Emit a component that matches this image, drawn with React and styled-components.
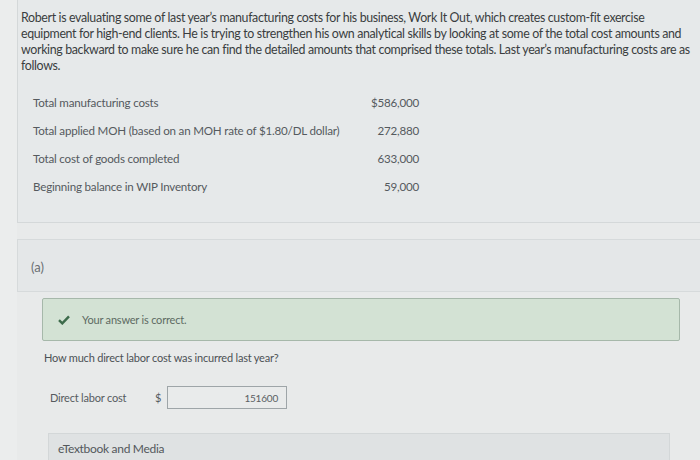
import React from 'react'
import styled, { createGlobalStyle } from 'styled-components'

const GlobalStyle = createGlobalStyle`
  html, body {
    margin: 0;
    padding: 0;
    background: #e8eaea;
  }
  body {
    font-family: Lato, "Open Sans", "Liberation Sans", sans-serif;
    color: #444;
  }
`

const Page = styled.div`
  width: 700px;
  height: 460px;
  overflow: hidden;
  display: flex;
`

const Gutter = styled.div`
  width: 17px;
  flex: none;
  background: #ebeded;
`

const Main = styled.div`
  flex: 1;
  display: flex;
  flex-direction: column;

  & > * {
    flex-shrink: 0;
  }
`

const QuestionPanel = styled.section`
  border: 1px solid #d4d8d9;
  border-top: none;
  border-right: none;
  background: #e6e9ea;
  padding: 10px 8px 22px 3px;
`

const Intro = styled.p`
  margin: 0;
  font-size: 12.4px;
  line-height: 16px;
  letter-spacing: -0.35px;
  color: #3a3d40;
`

const CostList = styled.div`
  margin: 14px 0 0 12px;
  width: 386px;
  display: grid;
  grid-template-columns: 1fr auto;
  grid-auto-rows: 28px;
  align-items: center;
  font-size: 11.6px;
  color: #555a5e;
  letter-spacing: -0.2px;
  white-space: nowrap;
`

const CostValue = styled.span`
  justify-self: end;
`

const PartHeader = styled.div`
  margin-top: 16px;
  height: 53px;
  border: 1px solid #d6dadb;
  border-right: none;
  background: #e4e7e8;
  display: flex;
  align-items: center;
  padding: 2px 0 0 13px;
  box-sizing: border-box;
  font-size: 13px;
  color: #6a6f73;
`

const AnswerArea = styled.div`
  padding: 6px 20px 0 25px;
  display: flex;
  flex-direction: column;

  & > * {
    flex-shrink: 0;
  }
`

const CorrectBox = styled.div`
  height: 43px;
  box-sizing: border-box;
  border: 1px solid #a6b8aa;
  border-radius: 2px;
  background: #d3e2d4;
  display: flex;
  align-items: center;
  gap: 12px;
  padding-left: 15px;
  font-size: 11px;
  color: #5d6a62;
  letter-spacing: -0.2px;
`

const Question = styled.p`
  margin: 10px 0 0 2px;
  font-size: 11px;
  line-height: 14px;
  color: #4c5155;
  letter-spacing: -0.2px;
`

const AnswerRow = styled.div`
  margin: 21px 0 0 8px;
  display: flex;
  align-items: center;
  font-size: 11px;
  color: #565b5f;
  letter-spacing: -0.2px;
`

const RowLabel = styled.span`
  width: 105px;
`

const Dollar = styled.span`
  width: 12px;
`

const AmountBox = styled.div`
  width: 120px;
  height: 23px;
  box-sizing: border-box;
  border: 1px solid #9ea5a8;
  background: #e9ebeb;
  display: flex;
  align-items: center;
  justify-content: flex-end;
  padding-right: 8px;
  font-size: 10px;
  color: #5a5f63;
`

const MediaBar = styled.div`
  margin: 24px 10px 0 6px;
  height: 40px;
  background: #dfe2e3;
  border: 1px solid #d3d7d8;
  display: flex;
  align-items: flex-start;
  padding: 7px 0 0 9px;
  box-sizing: border-box;
  font-size: 12px;
  color: #53585c;
  letter-spacing: -0.3px;
`

const costs = [
  ['Total manufacturing costs', '$586,000'],
  ['Total applied MOH (based on an MOH rate of $1.80/DL dollar)', '272,880'],
  ['Total cost of goods completed', '633,000'],
  ['Beginning balance in WIP Inventory', '59,000'],
]

const CheckIcon = () => (
  <svg width="12" height="10" viewBox="0 0 12 10">
    <path d="M1 5.2 L4.3 8.4 L11 1.4" fill="none" stroke="#3d6b4b" strokeWidth="2.4" />
  </svg>
)

export default function App() {
  return (
    <>
      <GlobalStyle />
      <Page>
        <Gutter />
        <Main>
          <QuestionPanel>
            <Intro>
              Robert is evaluating some of last year’s manufacturing costs for his business, Work It Out, which creates custom-fit exercise
              equipment for high-end clients. He is trying to strengthen his own analytical skills by looking at some of the total cost amounts and
              working backward to make sure he can find the detailed amounts that comprised these totals. Last year’s manufacturing costs are as
              follows.
            </Intro>
            <CostList>
              {costs.map(([label, value]) => (
                <React.Fragment key={label}>
                  <span>{label}</span>
                  <CostValue>{value}</CostValue>
                </React.Fragment>
              ))}
            </CostList>
          </QuestionPanel>
          <PartHeader>(a)</PartHeader>
          <AnswerArea>
            <CorrectBox>
              <CheckIcon />
              Your answer is correct.
            </CorrectBox>
            <Question>How much direct labor cost was incurred last year?</Question>
            <AnswerRow>
              <RowLabel>Direct labor cost</RowLabel>
              <Dollar>$</Dollar>
              <AmountBox>151600</AmountBox>
            </AnswerRow>
            <MediaBar>eTextbook and Media</MediaBar>
          </AnswerArea>
        </Main>
      </Page>
    </>
  )
}
